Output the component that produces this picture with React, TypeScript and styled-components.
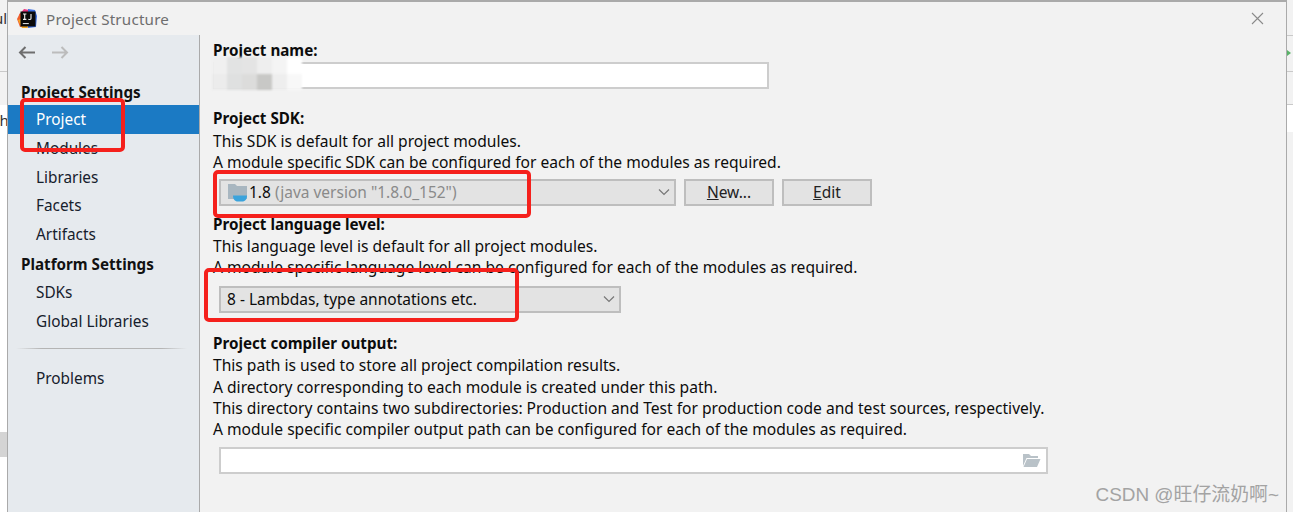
import React from "react";
import styled, { createGlobalStyle } from "styled-components";

const Global = createGlobalStyle`
  html, body { margin: 0; padding: 0; background: #f2f2f2; }
  body { font-family: "Noto Sans", "Open Sans", sans-serif; font-size: 15.6px; color: #0c0c0c; overflow: hidden; }
`;

const Page = styled.div`
  position: relative;
  width: 1293px;
  height: 512px;
  display: flex;
  overflow: hidden;
`;
const Behind = styled.div<{ $w: number }>`
  width: ${(p) => p.$w}px;
  flex: none;
  position: relative;
  background: #fff;
  display: flex;
  flex-direction: column;
  font-size: 15px;
  overflow: hidden;
  color: #333;
`;
const BehindLine = styled.div<{ $h: number; $bg?: string; $plain?: boolean }>`
  height: ${(p) => p.$h}px;
  flex: none;
  background: ${(p) => p.$bg ?? "#f2f2f2"};
  border-bottom: ${(p) => (p.$plain ? "none" : "1px solid #c9c9c9")};
  box-sizing: border-box;
  white-space: nowrap;
  overflow: hidden;
  text-indent: -6px;
  display: flex;
  align-items: center;
`;
const GreenTick = styled.div`
  position: absolute;
  left: 0;
  top: 50px;
  width: 0;
  height: 0;
  border-top: 3px solid transparent;
  border-bottom: 3px solid transparent;
  border-left: 4px solid #59b368;
`;
const Window = styled.div`
  flex: 1;
  display: flex;
  flex-direction: column;
  background: #f2f2f2;
  border-left: 1px solid #aaa;
  border-right: 1px solid #aaa;
  border-top: 2px solid #aaa;
  min-width: 0;
`;
const TitleBar = styled.div`
  height: 33px;
  flex: none;
  display: flex;
  align-items: center;
  padding: 0 22px 0 8px;
  gap: 8px;
`;
const Title = styled.div`
  flex: 1;
  font-size: 15.2px;
  color: #6e6e6e;
  letter-spacing: 0.2px;
`;
const Body = styled.div`
  flex: 1;
  display: flex;
  min-height: 0;
`;
const Sidebar = styled.nav`
  width: 191px;
  flex: none;
  background: #e6eaee;
  border-right: 1px solid #aaa;
  display: flex;
  flex-direction: column;
`;
const NavArrows = styled.div`
  height: 35px;
  display: flex;
  align-items: center;
  gap: 15px;
  padding-left: 10px;
  margin-bottom: 10px;
`;
const Group = styled.div<{ $top?: number; $h?: number }>`
  height: ${(p) => p.$h ?? 25}px;
  line-height: ${(p) => p.$h ?? 25}px;
  margin-top: ${(p) => p.$top ?? 0}px;
  padding-left: 13px;
  font-weight: 700;
  font-size: 15.2px;
  color: #111;
`;
const Item = styled.div<{ $active?: boolean }>`
  height: 28.75px;
  line-height: 28.75px;
  padding-left: 28px;
  font-size: 15.35px;
  color: ${(p) => (p.$active ? "#fff" : "#16202c")};
  background: ${(p) => (p.$active ? "#1b7ac4" : "transparent")};
`;
const Separator = styled.div`
  height: 1px;
  margin: 13px 12px 15px 8px;
  background: linear-gradient(90deg, #e6eaee, #b4b4b4 15%, #b4b4b4 85%, #e6eaee);
`;
const Content = styled.main`
  flex: 1;
  padding: 5px 0 0 13px;
  display: flex;
  flex-direction: column;
  align-items: flex-start;
  min-width: 0;
`;
const Label = styled.div<{ $top?: number }>`
  height: 21.4px;
  line-height: 21.4px;
  font-weight: 700;
  font-size: 15.2px;
  white-space: nowrap;
  margin-top: ${(p) => p.$top ?? 0}px;
`;
const Line = styled.div`
  height: 21.4px;
  line-height: 22.4px;
  white-space: nowrap;
`;
const TextInput = styled.div<{ $w: number; $top: number; $left?: number }>`
  position: relative;
  width: ${(p) => p.$w}px;
  height: 27px;
  box-sizing: border-box;
  margin-top: ${(p) => p.$top}px;
  margin-left: ${(p) => p.$left ?? 0}px;
  background: #fff;
  border: 2px solid #cdcdcd;
  display: flex;
  align-items: center;
  justify-content: flex-end;
  padding-right: 5px;
`;
const Row = styled.div<{ $top: number }>`
  display: flex;
  gap: 8px;
  margin-top: ${(p) => p.$top}px;
  margin-left: 6px;
`;
const Combo = styled.div<{ $w: number }>`
  width: ${(p) => p.$w}px;
  height: 27px;
  box-sizing: border-box;
  background: #e3e3e3;
  border: 2px solid #bebebe;
  display: flex;
  align-items: center;
  padding: 0 4px 0 6px;
  font-size: 15.5px;
  gap: 1px;
`;
const ComboText = styled.span`
  flex: 1;
  white-space: nowrap;
`;
const Muted = styled.span`
  color: #8a8a8a;
`;
const Button = styled.div`
  width: 90px;
  height: 27px;
  box-sizing: border-box;
  background: #e3e3e3;
  border: 2px solid #bebebe;
  display: flex;
  align-items: center;
  justify-content: center;
  font-size: 15.5px;
  color: #222;
`;
const Mnemonic = styled.span`
  text-decoration: underline;
`;
const Mark = styled.div<{ $x: number; $y: number; $w: number; $h: number }>`
  position: absolute;
  left: ${(p) => p.$x}px;
  top: ${(p) => p.$y}px;
  width: ${(p) => p.$w}px;
  height: ${(p) => p.$h}px;
  box-sizing: border-box;
  border: 4px solid #f5201c;
  border-radius: 5px;
`;
const Blur = styled.div`
  position: absolute;
  left: 212px;
  top: 57px;
  width: 103px;
  height: 33px;
  display: grid;
  grid-template-columns: repeat(6, 15px);
  grid-template-rows: repeat(2, 16.5px);
  filter: blur(1px);
`;
const BlurCell = styled.div<{ $c: string }>`
  background: ${(p) => p.$c};
`;
const Watermark = styled.div`
  position: absolute;
  right: 14px;
  top: 479px;
  font-family: "Liberation Sans", "Noto Sans CJK SC", sans-serif;
  font-size: 18.9px;
  color: #a3a3a3;
  white-space: nowrap;
`;

const Chevron = () => (
  <svg width="12" height="8" viewBox="0 0 12 8" fill="none">
    <path d="M1 1.5 L6 6.5 L11 1.5" stroke="#777" strokeWidth="1.2" />
  </svg>
);

const cells = ["#f0f0f0", "#e2e3e3", "#e4e4e4", "#eeeeee", "#f4f4f4", "#ffffff", "#ececec", "#dfe0e0", "#dcdcdb", "#c8c8c6", "#eeeeee", "#f8f8f8"];

export default function App() {
  return (
    <Page>
      <Global />
      <Behind $w={7}>
        <BehindLine $h={36} $plain>uly</BehindLine>
        <BehindLine $h={36} />
        <BehindLine $h={33} $plain />
        <BehindLine $h={30} $bg="#fff" $plain>th</BehindLine>
        <BehindLine $h={297} $bg="#fff" $plain />
        <BehindLine $h={25} $bg="#d4d4d4" $plain />
        <BehindLine $h={55} $bg="#fff" $plain />
      </Behind>
      <Window>
        <TitleBar>
          <svg width="22" height="22" viewBox="0 0 22 22">
            <path d="M3 7 L8 1 L13 2 L12 10 L5 14 Z" fill="#e8327c" />
            <path d="M1 11 L4 5 L11 9 L10 18 L4 19 Z" fill="#f0602e" />
            <path d="M12 1 L19 2 L21 8 L20 19 L12 20 Z" fill="#3b6fe0" />
            <path d="M2 12 L6 20 L12 20 L8 10 Z" fill="#f5a623" />
            <rect x="4.5" y="3.5" width="15" height="15" fill="#0b0b0b" />
            <path d="M7 6h3.4M8.7 6v5.4M7 11.4h3.4M15 6v4.4c0 1.2-1.7 1.4-2.8.7" stroke="#f2f2f2" strokeWidth="1.1" fill="none" />
            <rect x="6.8" y="15" width="6" height="1.1" fill="#d8d8d8" />
          </svg>
          <Title>Project Structure</Title>
          <svg width="13" height="13" viewBox="0 0 13 13">
            <path d="M1 1 L12 12 M12 1 L1 12" stroke="#8a8a8a" strokeWidth="1.1" />
          </svg>
        </TitleBar>
        <Body>
          <Sidebar>
            <NavArrows>
              <svg width="18" height="13" viewBox="0 0 18 13" fill="none">
                <path d="M17 6.5 H2 M7.5 1 L2 6.5 L7.5 12" stroke="#6e6e6e" strokeWidth="2" />
              </svg>
              <svg width="18" height="13" viewBox="0 0 18 13" fill="none">
                <path d="M1 6.5 H16 M10.5 1 L16 6.5 L10.5 12" stroke="#bcbcbc" strokeWidth="2" />
              </svg>
            </NavArrows>
            <Group>Project Settings</Group>
            <Item $active>Project</Item>
            <Item>Modules</Item>
            <Item>Libraries</Item>
            <Item>Facets</Item>
            <Item>Artifacts</Item>
            <Group $top={2} $h={27}>Platform Settings</Group>
            <Item>SDKs</Item>
            <Item>Global Libraries</Item>
            <Separator />
            <Item>Problems</Item>
          </Sidebar>
          <Content>
            <Label>Project name:</Label>
            <TextInput $w={556} $top={1} />
            <Label $top={19}>Project SDK:</Label>
            <Line>This SDK is default for all project modules.</Line>
            <Line>A module specific SDK can be configured for each of the modules as required.</Line>
            <Row $top={6}>
              <Combo $w={457}>
                <svg width="21" height="19" viewBox="0 0 21 19">
                  <path d="M1 1 H8 L10 3 H20 V16 H1 Z" fill="#a8b6c0" />
                  <path d="M6 12.5 H20 C20 16 18.5 18.5 15 18.5 H11 C7.5 18.5 6 16 6 12.5 Z" fill="#3aa3dc" />
                </svg>
                <ComboText>
                  1.8 <Muted>(java version "1.8.0_152")</Muted>
                </ComboText>
                <Chevron />
              </Combo>
              <Button>
                <span>
                  <Mnemonic>N</Mnemonic>ew...
                </span>
              </Button>
              <Button>
                <span>
                  <Mnemonic>E</Mnemonic>dit
                </span>
              </Button>
            </Row>
            <Label $top={8}>Project language level:</Label>
            <Line>This language level is default for all project modules.</Line>
            <Line>A module specific language level can be configured for each of the modules as required.</Line>
            <Row $top={8}>
              <Combo $w={402}>
                <ComboText>8 - Lambdas, type annotations etc.</ComboText>
                <Chevron />
              </Combo>
            </Row>
            <Label $top={20}>Project compiler output:</Label>
            <Line>This path is used to store all project compilation results.</Line>
            <Line>A directory corresponding to each module is created under this path.</Line>
            <Line>This directory contains two subdirectories: Production and Test for production code and test sources, respectively.</Line>
            <Line>A module specific compiler output path can be configured for each of the modules as required.</Line>
            <TextInput $w={829} $top={7} $left={6}>
              <svg width="19" height="15" viewBox="0 0 19 15">
                <path d="M1 1 H7 L9 3 H16 V5 H4.5 L1 13 Z" fill="#b9c2c8" />
                <path d="M5 6 H18.5 L15 14 H1.5 Z" fill="#b9c2c8" />
              </svg>
            </TextInput>
          </Content>
        </Body>
      </Window>
      <Behind $w={6}>
        <BehindLine $h={36} />
        <BehindLine $h={36} />
        <BehindLine $h={33} />
        <BehindLine $h={27} $bg="#fff" $plain />
        <BehindLine $h={380} $plain />
        <GreenTick />
      </Behind>
      <Blur>
        {cells.map((c, i) => (
          <BlurCell key={i} $c={c} />
        ))}
      </Blur>
      <Mark $x={20} $y={98} $w={105} $h={54} />
      <Mark $x={213} $y={170} $w={318} $h={48} />
      <Mark $x={204} $y={268} $w={315} $h={54} />
      <Watermark>CSDN @旺仔流奶啊~</Watermark>
    </Page>
  );
}
